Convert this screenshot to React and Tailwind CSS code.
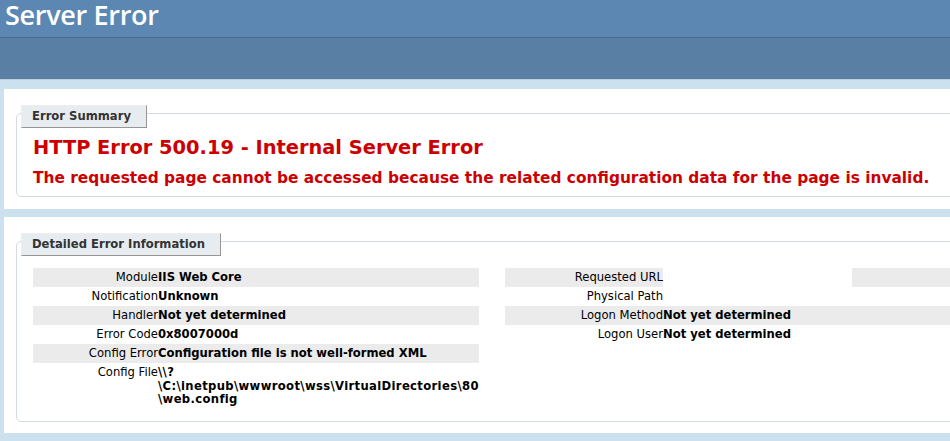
import React from 'react';

const leftRows = [
    { label: 'Module', value: 'IIS Web Core', alt: true },
    { label: 'Notification', value: 'Unknown' },
    { label: 'Handler', value: 'Not yet determined', alt: true },
    { label: 'Error Code', value: '0x8007000d' },
    { label: 'Config Error', value: 'Configuration file is not well-formed XML', alt: true },
];

const rightRows = [
    { label: 'Requested URL', value: '', alt: true, split: true },
    { label: 'Physical Path', value: '' },
    { label: 'Logon Method', value: 'Not yet determined', alt: true },
    { label: 'Logon User', value: 'Not yet determined' },
];

const Legend = ({ children }) => (
    <div className="-mt-[9px] -ml-[12px] self-start bg-[#E7ECF0] border-t border-l border-t-[#EDEDED] border-l-[#EDEDED] border-r border-b border-r-[#969696] border-b-[#969696] pl-[10px] pr-[15px] py-[4px] text-[11.6px] leading-[13px] font-bold text-[#333333]">
        {children}
    </div>
);

const App = () => {
    return (
        <div className="min-h-screen w-full overflow-hidden bg-[#CBE1EF] font-['DejaVu_Sans',Verdana,sans-serif] text-[11.6px] text-black">
            <div className="h-[37px] bg-[#5C87B2] px-[5px] pt-[1px]">
                <h1 className="font-['Open_Sans',sans-serif] text-[27px] leading-[28px] tracking-[-0.3px] font-semibold text-white">Server Error</h1>
            </div>
            <div className="h-[43px] bg-[#5A7FA5] border-t border-[#4A6C8E] border-b border-b-[#C1CFDD]"></div>

            <div className="pt-[9px] pl-[4px] w-[1100px]">
                {/* summary */}
                <div className="bg-white h-[120px] pt-[24px] pl-[12px]">
                    <div className="flex flex-col border border-[#D3DAE0] rounded-[5px] h-[84px] pl-[16px]">
                        <Legend>Error Summary</Legend>
                        <h2 className="mt-[8px] text-[19.4px] leading-[24px] font-bold text-[#CC0000]">HTTP Error 500.19 - Internal Server Error</h2>
                        <h3 className="mt-[8px] text-[15.4px] leading-[20px] font-bold text-[#CC0000]">The requested page cannot be accessed because the related configuration data for the page is invalid.</h3>
                    </div>
                </div>

                {/* details */}
                <div className="mt-[8px] bg-white h-[216px] pt-[24px] pl-[12px]">
                    <div className="flex flex-col border border-[#D3DAE0] rounded-[5px] h-[181px] pl-[16px]">
                        <Legend>Detailed Error Information</Legend>
                        <div className="mt-[12px] flex gap-[26px]">
                            <table className="w-[446px] table-fixed border-collapse">
                                <tbody>
                                    {leftRows.map((r) => (
                                        <tr key={r.label} className={r.alt ? 'bg-[#EBEBEB]' : ''}>
                                            <td className="w-[125px] py-[3px] leading-[13px] text-right align-top">{r.label}</td>
                                            <td className="py-[3px] leading-[13px] font-bold align-top">{r.value}</td>
                                        </tr>
                                    ))}
                                    <tr>
                                        <td className="w-[125px] py-[3px] leading-[13.5px] text-right align-top">Config File</td>
                                        <td className="py-[3px] leading-[13.5px] font-bold align-top tracking-[0.35px]">
                                            \\?<br />\C:\inetpub\wwwroot\wss\VirtualDirectories\80<br />\web.config
                                        </td>
                                    </tr>
                                </tbody>
                            </table>
                            <table className="w-[560px] table-fixed border-collapse self-start">
                                <tbody>
                                    {rightRows.map((r) => (
                                        <tr key={r.label} className={r.alt && !r.split ? 'bg-[#EBEBEB]' : ''}>
                                            <td className={`w-[158px] py-[3px] leading-[13px] text-right align-top ${r.split ? 'bg-[#EBEBEB]' : ''}`}>{r.label}</td>
                                            <td className="w-[189px] py-[3px] leading-[13px] font-bold align-top">{r.value}</td>
                                            <td className={`py-[3px] leading-[13px] ${r.split ? 'bg-[#EBEBEB]' : ''}`}></td>
                                        </tr>
                                    ))}
                                </tbody>
                            </table>
                        </div>
                    </div>
                </div>
            </div>
        </div>
    );
};

export default App;
